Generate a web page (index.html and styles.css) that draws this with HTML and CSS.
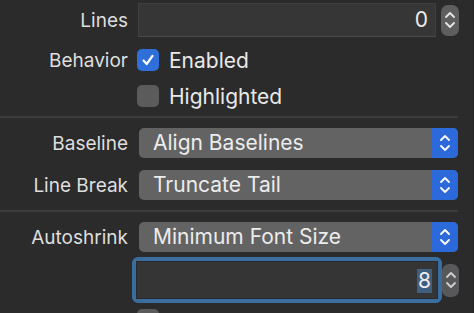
FILE: index.html
```html
<!DOCTYPE html>
<html lang="en">
<head>
  <meta charset="UTF-8">
  <meta name="viewport" content="width=device-width, initial-scale=1.0">
  <link rel="stylesheet" href="styles.css">
  <title>Label Attributes</title>
</head>
<body>

  <div class="panel">
    <div class="row row-lines">
      <span class="label">Lines</span>
      <div class="control">
        <div class="field">0</div>
        <div class="stepper">
          <svg width="12" height="22" viewBox="0 0 12 22"><path d="M2 8 L6 4 L10 8 M2 14 L6 18 L10 14" fill="none" stroke="#e6e6e6" stroke-width="1.8" stroke-linecap="round" stroke-linejoin="round"/></svg>
        </div>
      </div>
    </div>

    <div class="row row-check">
      <span class="label">Behavior</span>
      <div class="control">
        <span class="checkbox checked">
          <svg width="16" height="16" viewBox="0 0 16 16"><path d="M3.5 8.5 L6.7 12 L12.5 3.8" fill="none" stroke="#fff" stroke-width="2.2" stroke-linecap="round" stroke-linejoin="round"/></svg>
        </span>
        <span class="check-text">Enabled</span>
      </div>
    </div>

    <div class="row row-check">
      <span class="label"></span>
      <div class="control">
        <span class="checkbox"></span>
        <span class="check-text">Highlighted</span>
      </div>
    </div>

    <div class="separator"></div>

    <div class="row row-popup first">
      <span class="label">Baseline</span>
      <div class="control">
        <div class="popup">
          <span class="popup-text">Align Baselines</span>
          <span class="popup-arrows">
            <svg width="12" height="22" viewBox="0 0 12 22"><path d="M2 8 L6 4 L10 8 M2 14 L6 18 L10 14" fill="none" stroke="#fff" stroke-width="1.8" stroke-linecap="round" stroke-linejoin="round"/></svg>
          </span>
        </div>
      </div>
    </div>

    <div class="row row-popup">
      <span class="label">Line Break</span>
      <div class="control">
        <div class="popup">
          <span class="popup-text">Truncate Tail</span>
          <span class="popup-arrows">
            <svg width="12" height="22" viewBox="0 0 12 22"><path d="M2 8 L6 4 L10 8 M2 14 L6 18 L10 14" fill="none" stroke="#fff" stroke-width="1.8" stroke-linecap="round" stroke-linejoin="round"/></svg>
          </span>
        </div>
      </div>
    </div>

    <div class="separator after-popups"></div>

    <div class="row row-popup first">
      <span class="label">Autoshrink</span>
      <div class="control">
        <div class="popup">
          <span class="popup-text">Minimum Font Size</span>
          <span class="popup-arrows">
            <svg width="12" height="22" viewBox="0 0 12 22"><path d="M2 8 L6 4 L10 8 M2 14 L6 18 L10 14" fill="none" stroke="#fff" stroke-width="1.8" stroke-linecap="round" stroke-linejoin="round"/></svg>
          </span>
        </div>
      </div>
    </div>

    <div class="row row-focus">
      <span class="label"></span>
      <div class="control">
        <div class="focus-ring">
          <div class="field focused"><span class="selected">8</span></div>
        </div>
        <div class="stepper small">
          <svg width="12" height="22" viewBox="0 0 12 22"><path d="M2 8 L6 4 L10 8 M2 14 L6 18 L10 14" fill="none" stroke="#cfcfcf" stroke-width="1.8" stroke-linecap="round" stroke-linejoin="round"/></svg>
        </div>
      </div>
    </div>

    <div class="row row-peek">
      <span class="label"></span>
      <div class="control">
        <span class="checkbox"></span>
      </div>
    </div>
  </div>

</body>
</html>
```

FILE: styles.css
```css
body {
  margin: 0;
  padding: 0;
  background-color: #2b2b2c;
  font-family: Inter, "Noto Sans", sans-serif;
  color: #e4e4e4;
  overflow: hidden;
}

.panel {
  width: 473px;
  height: 313px;
  border-right: 1px solid #232324;
  overflow: hidden;
}

.row {
  display: grid;
  grid-template-columns: 128px 1fr;
  column-gap: 10px;
  align-items: center;
  padding-right: 15px;
}

.label {
  text-align: right;
  font-size: 19px;
  color: #dedede;
}

.control {
  display: flex;
  align-items: center;
  height: 100%;
}

/* text field rows */
.row-lines {
  height: 34px;
  margin-top: 3px;
}

.field {
  flex: 1;
  height: 34px;
  box-sizing: border-box;
  background-color: #363637;
  border: 1px solid #404041;
  border-bottom-color: #4a4a4b;
  text-align: right;
  padding-right: 7px;
  font-size: 21px;
  line-height: 32px;
  color: #ececec;
}

.stepper {
  width: 18px;
  height: 31px;
  margin-left: 5px;
  margin-right: -1px;
  background-color: #5e5e5f;
  border-radius: 7px;
  display: flex;
  align-items: center;
  justify-content: center;
}

/* checkboxes */
.row-check {
  height: 36px;
}

.row-check:nth-child(2) {
  margin-top: 5px;
}

.checkbox {
  width: 22px;
  height: 22px;
  box-sizing: border-box;
  border-radius: 5px;
  background-color: #5b5b5c;
  display: flex;
  align-items: center;
  justify-content: center;
  margin-left: -1px;
}

.checkbox.checked {
  background-color: #2e6fd9;
}

.check-text {
  font-size: 21px;
  margin-left: 10px;
  color: #e8e8e8;
}

.separator {
  height: 2px;
  background-color: #3c3c3d;
  margin-top: 2px;
  margin-right: 15px;
}

.separator.after-popups {
  margin-top: 10px;
}

/* popup buttons */
.row-popup {
  height: 30px;
  margin-top: 12px;
}

.row-popup.first {
  margin-top: 10px;
}

.popup {
  flex: 1;
  height: 30px;
  display: flex;
  border-radius: 5px;
  overflow: hidden;
  margin-left: 1px;
  background-color: #636364;
}

.popup-text {
  flex: 1;
  padding-left: 14px;
  font-size: 21px;
  line-height: 30px;
  color: #ececec;
}

.popup-arrows {
  width: 26px;
  background-color: #2c69da;
  display: flex;
  align-items: center;
  justify-content: center;
}

/* focused field */
.row-focus {
  height: 46px;
  margin-top: 5px;
}

.focus-ring {
  flex: 1;
  height: 46px;
  margin-left: -6px;
  box-sizing: border-box;
  border: 4px solid #3a6e9f;
  border-radius: 6px;
  display: flex;
}

.field.focused {
  height: 38px;
  border-color: #2a2a2b;
  background-color: #353536;
  line-height: 36px;
  padding-right: 5px;
}

.selected {
  display: inline-block;
  background-color: #3f5e80;
  line-height: 24px;
  padding: 0 1px;
  vertical-align: middle;
}

.stepper.small {
  height: 33px;
  width: 17px;
  margin-left: 0;
  background-color: #58585a;
}

.row-peek {
  height: 22px;
  margin-top: 6px;
  align-items: start;
}
```
